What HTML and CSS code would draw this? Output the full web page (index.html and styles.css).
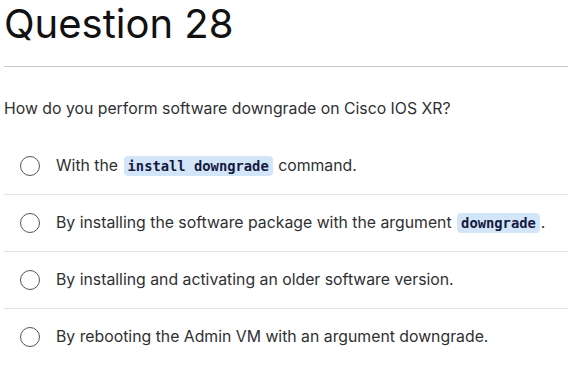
FILE: index.html
```html
<!doctype html>
<html lang="en">
    <head>
        <meta charset="UTF-8" />
        <title>Question 28</title>
        <link rel="stylesheet" href="styles.css">
    </head>
    <body>
        <div class="quiz">
            <h1 class="quiz-title">Question 28</h1>
            <p class="question">How do you perform software downgrade on Cisco IOS XR?</p>
            <ul class="options">
                <li class="option">
                    <span class="radio"></span>
                    <span class="label">With the <code>install downgrade</code> command.</span>
                </li>
                <li class="option">
                    <span class="radio"></span>
                    <span class="label">By installing the software package with the argument <code>downgrade</code>.</span>
                </li>
                <li class="option">
                    <span class="radio"></span>
                    <span class="label">By installing and activating an older software version.</span>
                </li>
                <li class="option">
                    <span class="radio"></span>
                    <span class="label">By rebooting the Admin VM with an argument downgrade.</span>
                </li>
            </ul>
        </div>
    </body>
</html>
```

FILE: styles.css
```css
:root {
    --text-color: #2f3033;
    --title-color: #111111;
    --rule-color: #c8c8c8;
    --row-rule-color: #e4e4e4;
    --code-bg: #d3e5f9;
    --code-color: #15193f;
}

body {
    margin: 0;
    font-family: "Inter", "Noto Sans", sans-serif;
    color: var(--text-color);
    background: #ffffff;
}

.quiz {
    padding-left: 4px;
}

.quiz-title {
    margin: 0;
    padding-bottom: 18px;
    border-bottom: 1px solid var(--rule-color);
    font-size: 40px;
    line-height: 48px;
    font-weight: 400;
    color: var(--title-color);
}

.question {
    margin: 31px 0 18px;
    font-size: 15.8px;
    line-height: 22px;
}

.options {
    list-style: none;
    margin: 0;
    padding: 0;
}

.option {
    display: flex;
    align-items: center;
    gap: 16px;
    padding: 18px 0 18px 16px;
    font-size: 15.8px;
    line-height: 20px;
    border-bottom: 1px solid var(--row-rule-color);
}

.option:last-child {
    border-bottom: none;
}

.radio {
    flex: none;
    width: 18px;
    height: 18px;
    border: 1.5px solid #555555;
    border-radius: 50%;
}

code {
    font-family: "DejaVu Sans Mono", monospace;
    font-weight: 700;
    font-size: 13.8px;
    line-height: 16px;
    color: var(--code-color);
    background: var(--code-bg);
    padding: 2px 4px;
    border-radius: 4px;
    margin: 0 1px;
}
```
